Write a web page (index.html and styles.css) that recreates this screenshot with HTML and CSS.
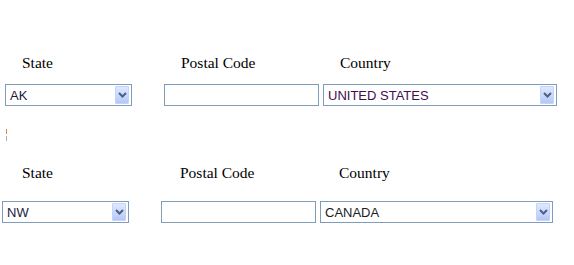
FILE: index.html
```html
<!DOCTYPE html>
<html lang="en">
<head>
    <meta charset="UTF-8">
    <title>Address Form</title>
    <link rel="stylesheet" href="styles.css">
</head>
<body>
    <div class="address-block first">
        <div class="label-row">
            <label class="field-label">State</label>
            <label class="field-label">Postal Code</label>
            <label class="field-label">Country</label>
        </div>
        <div class="field-row">
            <div class="combo state-combo">
                <span class="combo-value dark-blue">AK</span>
                <span class="combo-btn"><svg width="9" height="6" viewBox="0 0 9 6"><path d="M1 1 L4.5 4.5 L8 1" fill="none" stroke="#4d6185" stroke-width="2"/></svg></span>
            </div>
            <input class="text-input" type="text">
            <div class="combo country-combo">
                <span class="combo-value purple">UNITED STATES</span>
                <span class="combo-btn"><svg width="9" height="6" viewBox="0 0 9 6"><path d="M1 1 L4.5 4.5 L8 1" fill="none" stroke="#4d6185" stroke-width="2"/></svg></span>
            </div>
        </div>
    </div>

    <div class="marker"></div>

    <div class="address-block second">
        <div class="label-row">
            <label class="field-label">State</label>
            <label class="field-label">Postal Code</label>
            <label class="field-label">Country</label>
        </div>
        <div class="field-row">
            <div class="combo state-combo">
                <span class="combo-value dark-blue">NW</span>
                <span class="combo-btn"><svg width="9" height="6" viewBox="0 0 9 6"><path d="M1 1 L4.5 4.5 L8 1" fill="none" stroke="#4d6185" stroke-width="2"/></svg></span>
            </div>
            <input class="text-input" type="text">
            <div class="combo country-combo narrow">
                <span class="combo-value">CANADA</span>
                <span class="combo-btn"><svg width="9" height="6" viewBox="0 0 9 6"><path d="M1 1 L4.5 4.5 L8 1" fill="none" stroke="#4d6185" stroke-width="2"/></svg></span>
            </div>
        </div>
    </div>
</body>
</html>
```

FILE: styles.css
```css
* {
    margin: 0;
    padding: 0;
    box-sizing: border-box;
}

body {
    background: #fff;
    font-family: "Liberation Serif", "Times New Roman", serif;
    color: #000;
}

.address-block.first {
    padding: 54px 0 0 5px;
}

.address-block.second {
    padding: 23px 0 0 2px;
}

.label-row,
.field-row {
    display: grid;
    grid-template-columns: 159px 159px auto;
}

.label-row {
    height: 18px;
}

.first .label-row {
    margin-bottom: 12px;
}

.second .label-row {
    margin-bottom: 19px;
}

.field-label {
    font-size: 15.5px;
    line-height: 18px;
    padding-left: 17px;
}

.second .field-label {
    padding-left: 20px;
}

.second .field-label:nth-child(2),
.second .field-label:nth-child(3) {
    padding-left: 19px;
}

.field-row {
    align-items: center;
}

.combo {
    display: flex;
    align-items: center;
    height: 22px;
    border: 1px solid #7f9db9;
    background: #fff;
    padding: 1px 2px 1px 4px;
    font-family: "Liberation Sans", Arial, sans-serif;
    font-size: 13px;
}

.state-combo {
    width: 127px;
}

.country-combo {
    width: 234px;
}

.country-combo.narrow {
    width: 233px;
}

.combo-value {
    flex: 1;
    color: #1c1c1c;
}

.combo-value.dark-blue {
    color: #1a1a40;
}

.combo-value.purple {
    color: #3f0d50;
}

.combo-btn {
    width: 14px;
    height: 18px;
    display: flex;
    align-items: center;
    justify-content: center;
    border: 1px solid #c3d3fd;
    border-radius: 1px;
    background: linear-gradient(to bottom, #dfe8fe 0%, #c6d6fb 60%, #b4c8f5 100%);
}

.text-input {
    width: 155px;
    height: 22px;
    border: 1px solid #7f9db9;
    background: #fff;
    outline: none;
}

.marker {
    width: 1px;
    height: 12px;
    margin: 23px 0 0 6px;
    background: linear-gradient(to bottom, #d88a2a 0%, #d88a2a 45%, #fff 45%, #fff 55%, #a8a8b8 55%, #a8a8b8 100%);
}
```
